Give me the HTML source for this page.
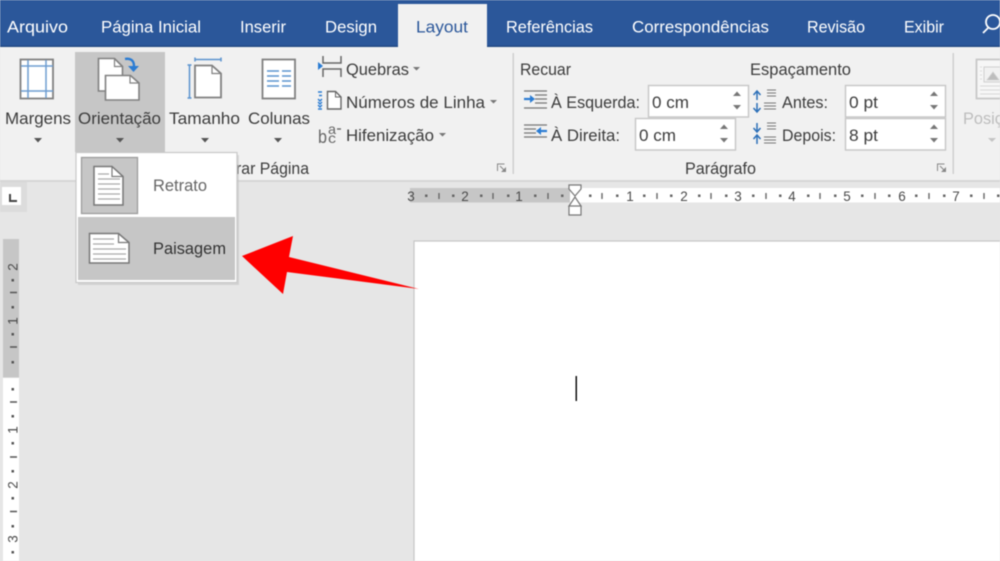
<!DOCTYPE html>
<html><head><meta charset="utf-8"><style>
html,body{margin:0;padding:0;width:1000px;height:561px;overflow:hidden;background:#e6e6e6}
svg{display:block;filter:blur(.45px)}
text{font-family:"Liberation Sans",sans-serif;font-size:17px;fill:#3c3c3c}
.t text{fill:#fff}
.r text{font-size:13.500px;fill:#4a4a4a}
</style></head><body>
<svg width="1000" height="561" viewBox="0 0 1000 561" xmlns="http://www.w3.org/2000/svg">
<rect width="1000" height="561" fill="#e6e6e6"/>
<!-- title tabs -->
<rect width="1000" height="47" fill="#2b579a"/>
<rect y="45.500" width="1000" height="1.500" fill="#234a85"/>
<rect y="47" width="1000" height="133" fill="#f1f1f1"/>
<rect y="180" width="1000" height="2" fill="#d6d6d6"/>
<rect x="398" y="4" width="89" height="44" fill="#f1f1f1"/>
<g class="t">
<text x="7" y="32.500" textLength="61" lengthAdjust="spacingAndGlyphs">Arquivo</text>
<text x="101" y="32.500" textLength="100" lengthAdjust="spacingAndGlyphs">Página Inicial</text>
<text x="240" y="32.500" textLength="46" lengthAdjust="spacingAndGlyphs">Inserir</text>
<text x="325" y="32.500" textLength="52" lengthAdjust="spacingAndGlyphs">Design</text>
<text x="506" y="32.500" textLength="87" lengthAdjust="spacingAndGlyphs">Referências</text>
<text x="632" y="32.500" textLength="137" lengthAdjust="spacingAndGlyphs">Correspondências</text>
<text x="807" y="32.500" textLength="58" lengthAdjust="spacingAndGlyphs">Revisão</text>
<text x="904" y="32.500" textLength="40" lengthAdjust="spacingAndGlyphs">Exibir</text>
</g>
<text x="416" y="32.500" textLength="52" lengthAdjust="spacingAndGlyphs" style="fill:#2b579a">Layout</text>
<g fill="none" stroke="#fff" stroke-width="1.800"><circle cx="993" cy="22" r="7"/><path d="M988 28l-5 5"/></g>

<!-- orientation highlight -->
<rect x="75" y="52" width="90" height="100" fill="#c6c6c6"/>

<!-- Margens icon -->
<rect x="20.500" y="59.500" width="32.500" height="39" fill="#fff" stroke="#808080" stroke-width="1.800"/>
<path d="M28 60v38M46 60v38M21 66h32M21 91h32" stroke="#6d9dd1" stroke-width="1.500" fill="none"/>
<!-- Orientacao icon -->
<path d="M98.500 58.500h16l8 8v24.500h-24z" fill="#fff" stroke="#808080" stroke-width="1.600"/>
<path d="M105.500 75.500h25l8.500 7.500v17h-33.500z" fill="#fff" stroke="#808080" stroke-width="1.600"/>
<path d="M130 75.500v7.500h9M114.500 58.500v8h8" fill="none" stroke="#808080" stroke-width="1.200"/>
<path d="M125 59c5-1 9 1 9 7v3" fill="none" stroke="#2b7cd3" stroke-width="2.400"/>
<path d="M128 66h11l-5.500 6z" fill="#2b7cd3"/>
<!-- Tamanho icon -->
<path d="M195 65.500h17l9 8v24h-26z" fill="#fff" stroke="#808080" stroke-width="1.800"/>
<path d="M212 65.500v8h9" fill="none" stroke="#808080" stroke-width="1.200"/>
<path d="M195 59.500h26M195 57.500v4M221 57.500v4M189.500 65v33M187.500 65h4M187.500 98h4" fill="none" stroke="#5b93cf" stroke-width="1.500"/>
<!-- Colunas icon -->
<rect x="262.500" y="59.500" width="32.500" height="39" fill="#fff" stroke="#808080" stroke-width="1.800"/>
<path d="M267 71h12M282 71h9M267 76h12M282 76h9M267 81h12M282 81h9M267 86h12M282 86h9" stroke="#5b93cf" stroke-width="1.600"/>

<!-- large labels -->
<text x="5" y="124" textLength="66" lengthAdjust="spacingAndGlyphs">Margens</text>
<text x="78" y="124" textLength="83" lengthAdjust="spacingAndGlyphs">Orientação</text>
<text x="169" y="124" textLength="71" lengthAdjust="spacingAndGlyphs">Tamanho</text>
<text x="248" y="124" textLength="62" lengthAdjust="spacingAndGlyphs">Colunas</text>
<path d="M34 138h8l-4 4.500zM116 138h8l-4 4.500zM201 138h8l-4 4.500zM274 138h8l-4 4.500z" fill="#555"/>
<text x="236" y="174" textLength="73" lengthAdjust="spacingAndGlyphs">rar Página</text>

<!-- small commands -->
<path d="M323 56v7h18v-7M323 77v-8h18v8" fill="none" stroke="#666" stroke-width="1.500"/>
<path d="M318 62l5 4-5 4z" fill="#2b7cd3"/>
<path d="M327.500 91.500h8l5.500 5.500v12h-13.500z" fill="#fff" stroke="#666" stroke-width="1.400"/>
<path d="M335.500 91.500v5.500h5.500" fill="none" stroke="#666"/>
<path d="M318 92h4M319 95.500h3M318 99l2 2 2-2M318 102l2 2 2-2M318 105l2 2 2-2M318 109h4" stroke="#2b7cd3" stroke-width="1.400" fill="none"/>
<text x="318" y="143" style="font-size:18px;fill:#666" textLength="9" lengthAdjust="spacingAndGlyphs">b</text>
<text x="328" y="143" style="font-size:14px;fill:#666" textLength="8" lengthAdjust="spacingAndGlyphs">c</text>
<text x="328" y="134" style="font-size:14px;fill:#666" textLength="8" lengthAdjust="spacingAndGlyphs">a</text>
<path d="M337 129h4" stroke="#666" stroke-width="1.400"/>
<text x="346" y="75" textLength="63" lengthAdjust="spacingAndGlyphs">Quebras</text>
<text x="346" y="108" textLength="139" lengthAdjust="spacingAndGlyphs">Números de Linha</text>
<text x="346" y="141" textLength="88" lengthAdjust="spacingAndGlyphs">Hifenização</text>
<path d="M413 67h7l-3.500 3.500zM490 100h7l-3.500 3.500zM439 133h7l-3.500 3.500z" fill="#777"/>
<!-- launcher -->
<path d="M497.500 171v-7h7M500 166l5 5" fill="none" stroke="#888" stroke-width="1"/><path d="M501 172h5v-5z" fill="#888"/>
<path d="M937.500 171v-7h7M940 166l5 5" fill="none" stroke="#888" stroke-width="1"/><path d="M941 172h5v-5z" fill="#888"/>

<!-- separators -->
<rect x="512.500" y="53" width="1.500" height="121" fill="#d0d0d0"/>
<rect x="952.500" y="53" width="1.500" height="121" fill="#d0d0d0"/>

<!-- paragraph -->
<text x="520" y="75" textLength="51" lengthAdjust="spacingAndGlyphs">Recuar</text>
<text x="750" y="75" textLength="101" lengthAdjust="spacingAndGlyphs">Espaçamento</text>
<path d="M524 91h23M535 95h12M535 99h12M535 103h12M524 108h23" stroke="#777" stroke-width="1.300"/>
<path d="M524 99h7" stroke="#2b7cd3" stroke-width="2.200"/><path d="M530 95l5 4-5 4z" fill="#2b7cd3"/>
<path d="M524 125h23M524 129h12M524 133h12M524 137h23" stroke="#777" stroke-width="1.300"/>
<path d="M540 131h7" stroke="#2b7cd3" stroke-width="2.200"/><path d="M541 127l-5 4 5 4z" fill="#2b7cd3"/>
<text x="551" y="108" textLength="89" lengthAdjust="spacingAndGlyphs">À Esquerda:</text>
<text x="551" y="141" textLength="69" lengthAdjust="spacingAndGlyphs">À Direita:</text>
<g fill="#fff" stroke="#c6c6c6" stroke-width="1.400">
<rect x="648.500" y="85.500" width="100" height="31.500"/>
<rect x="635.500" y="118.500" width="100" height="31.500"/>
<rect x="845.500" y="85.500" width="100" height="31.500"/>
<rect x="845.500" y="118.500" width="100" height="31.500"/>
</g>
<text x="652" y="108" textLength="37" lengthAdjust="spacingAndGlyphs">0 cm</text>
<text x="639" y="141" textLength="37" lengthAdjust="spacingAndGlyphs">0 cm</text>
<text x="849" y="108" textLength="29" lengthAdjust="spacingAndGlyphs">0 pt</text>
<text x="849" y="141" textLength="29" lengthAdjust="spacingAndGlyphs">8 pt</text>
<path d="M733 96h8l-4-4.500zM733 105h8l-4 4.500zM720 129h8l-4-4.500zM720 138h8l-4 4.500zM930 96h8l-4-4.500zM930 105h8l-4 4.500zM930 129h8l-4-4.500zM930 138h8l-4 4.500z" fill="#777"/>
<!-- spacing icons -->
<path d="M757 92v8M757 103v9" stroke="#2b6fb8" stroke-width="1.500"/>
<path d="M753.500 95l3.500-4 3.500 4M753.500 108l3.500 4 3.500-4" fill="none" stroke="#2b6fb8" stroke-width="1.500"/>
<path d="M767 90h9M767 93h9M767 96h9M764 103h12M764 106h12M764 109h12" stroke="#777" stroke-width="1"/>
<path d="M757 123v8M757 135v9" stroke="#2b6fb8" stroke-width="1.500"/>
<path d="M753.500 128l3.500 4 3.500-4M753.500 139l3.500-4 3.500 4" fill="none" stroke="#2b6fb8" stroke-width="1.500"/>
<path d="M767 123h9M767 126h9M767 129h9M764 137h12M764 140h12M764 143h12" stroke="#777" stroke-width="1"/>
<text x="782" y="108" textLength="46" lengthAdjust="spacingAndGlyphs">Antes:</text>
<text x="782" y="141" textLength="54" lengthAdjust="spacingAndGlyphs">Depois:</text>
<text x="685" y="174" textLength="71" lengthAdjust="spacingAndGlyphs">Parágrafo</text>

<!-- Posicao disabled -->
<rect x="976.500" y="59.500" width="30" height="39" fill="#f6f6f6" stroke="#c8c8c8" stroke-width="1.800"/>
<rect x="984" y="67" width="22" height="15" fill="#f1f1f1" stroke="#d0d0d0"/>
<path d="M987 80l6-8 6 8zM980 67h2M980 71h2M980 75h2M980 79h2M980 86h22M980 90h22M980 94h22" fill="#bdbdbd" stroke="#cfcfcf" stroke-width=".8"/>
<text x="963" y="124" textLength="58" lengthAdjust="spacingAndGlyphs" style="fill:#bdbdbd">Posição</text>
<path d="M988 138h8l-4 4z" fill="#c4c4c4"/>

<!-- horizontal ruler -->
<rect x="410" y="188" width="160" height="14.500" fill="#c6c6c6"/>
<rect x="570" y="188" width="430" height="14.500" fill="#fff"/>
<path d="M425 194.500h2.500v2.500h-2.500zM452 194.500h2.500v2.500h-2.500zM480 194.500h2.500v2.500h-2.500zM507 194.500h2.500v2.500h-2.500zM534 194.500h2.500v2.500h-2.500zM561 194.500h2.500v2.500h-2.500zM589 194.500h2.500v2.500h-2.500zM616 194.500h2.500v2.500h-2.500zM643 194.500h2.500v2.500h-2.500zM670 194.500h2.500v2.500h-2.500zM698 194.500h2.500v2.500h-2.500zM725 194.500h2.500v2.500h-2.500zM752 194.500h2.500v2.500h-2.500zM779 194.500h2.500v2.500h-2.500zM807 194.500h2.500v2.500h-2.500zM834 194.500h2.500v2.500h-2.500zM861 194.500h2.500v2.500h-2.500zM888 194.500h2.500v2.500h-2.500zM915 194.500h2.500v2.500h-2.500zM943 194.500h2.500v2.500h-2.500zM970 194.500h2.500v2.500h-2.500zM997 194.500h2.500v2.500h-2.500z" fill="#666"/>
<path d="M439 193v6M493 193v6M548 193v6M602 193v6M657 193v6M711 193v6M766 193v6M820 193v6M875 193v6M929 193v6M984 193v6" stroke="#666" stroke-width="1.400"/>
<g class="r" text-anchor="middle">
<text x="411" y="201">3</text><text x="465" y="201">2</text><text x="519" y="201">1</text>
<text x="630" y="201">1</text><text x="684" y="201">2</text><text x="738" y="201">3</text><text x="792" y="201">4</text><text x="847" y="201">5</text><text x="902" y="201">6</text><text x="956" y="201">7</text>
</g>
<path d="M569 185h12v4l-6 7-6-7zM569 206h12v9h-12zM569 206l6-9 6 9z" fill="#fff" stroke="#777" stroke-width="1.200"/>
<path d="M569 206h12" stroke="#777"/>

<!-- tab stop corner -->
<rect x="0" y="182" width="27" height="30" fill="#dcdcdc"/>
<rect x="2" y="187" width="19" height="18" fill="#fff"/>
<path d="M10 194v7h7" fill="none" stroke="#444" stroke-width="2"/>

<!-- vertical ruler -->
<rect x="3" y="239" width="16" height="138.500" fill="#c6c6c6"/>
<rect x="3" y="378" width="16" height="183" fill="#fff"/>
<path d="M11.500 279h2.500v2.500h-2.500zM11.500 306h2.500v2.500h-2.500zM11.500 333h2.500v2.500h-2.500zM11.500 361h2.500v2.500h-2.500zM11.500 388h2.500v2.500h-2.500zM11.500 415h2.500v2.500h-2.500zM11.500 442h2.500v2.500h-2.500zM11.500 470h2.500v2.500h-2.500zM11.500 497h2.500v2.500h-2.500zM11.500 525h2.500v2.500h-2.500zM11.500 551h2.500v2.500h-2.500z" fill="#555"/>
<path d="M10 292.500h7M10 347h7M10 402h7M10 457h7M10 511.500h7" stroke="#555" stroke-width="1.400"/>
<g class="r" text-anchor="middle">
<text transform="translate(17.500 267) rotate(-90)">2</text>
<text transform="translate(17.500 321) rotate(-90)">1</text>
<text transform="translate(17.500 430) rotate(-90)">1</text>
<text transform="translate(17.500 485) rotate(-90)">2</text>
<text transform="translate(17.500 539) rotate(-90)">3</text>
</g>

<!-- page -->
<rect x="414" y="241" width="590" height="324" fill="#fff" stroke="#c6c6c6" stroke-width="1.200"/>
<rect x="575.500" y="376" width="1.500" height="25" fill="#111"/>

<!-- dropdown -->
<rect x="78" y="155" width="161" height="130" fill="#bbb" opacity=".45"/>
<rect x="76" y="152.500" width="161" height="130" fill="#fff" stroke="#c8c8c8" stroke-width="1.200"/>
<rect x="81.500" y="157.500" width="56" height="56" fill="#c6c6c6" stroke="#9c9c9c" stroke-width="1.300"/>
<path d="M94 166.500h18l11 10v28.500h-29z" fill="#fff" stroke="#777" stroke-width="1.500"/>
<path d="M112 166.500v10h11" fill="none" stroke="#777" stroke-width="1.200"/>
<path d="M98 174h11M98 179h22M98 184h22M98 189h22M98 194h22M98 199h22" stroke="#aaa" stroke-width="1.200"/>
<text x="153" y="191" textLength="54" lengthAdjust="spacingAndGlyphs" style="fill:#666">Retrato</text>
<rect x="78" y="217" width="157" height="63" fill="#c6c6c6"/>
<path d="M89.500 233.500h29l10.500 9v20.500h-39.500z" fill="#fff" stroke="#777" stroke-width="1.500"/>
<path d="M118.500 233.500v9h10.500" fill="none" stroke="#777" stroke-width="1.200"/>
<path d="M93 239h21M93 244h21M93 249h33M93 254h33M93 259h33" stroke="#aaa" stroke-width="1.200"/>
<text x="153" y="254" textLength="73" lengthAdjust="spacingAndGlyphs" style="fill:#333">Paisagem</text>

<!-- red arrow -->
<polygon points="242,256 293,236 289,257 419,289 287,272 283,294" fill="#ff0000"/>
</svg>
</body></html>
